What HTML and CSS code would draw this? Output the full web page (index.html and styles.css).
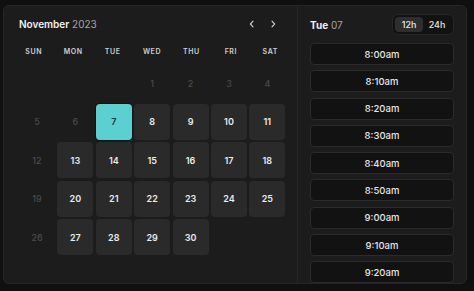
FILE: index.html
```html
<!DOCTYPE html>
<html lang="en">
<head>
    <meta charset="UTF-8">
    <title>Booker</title>
    <link rel="stylesheet" href="styles.css">
</head>
<body>
    <div class="booker">
        <div class="calendar">
            <div class="cal-header">
                <div class="month"><strong>November</strong> <span>2023</span></div>
                <div class="nav">
                    <button class="nav-btn" aria-label="Previous month">
                        <svg width="8" height="8" viewBox="0 0 8 8"><path d="M5 1.2 L2.4 4 L5 6.8" fill="none" stroke="#c8c8c8" stroke-width="1.2" stroke-linecap="round" stroke-linejoin="round"/></svg>
                    </button>
                    <button class="nav-btn" aria-label="Next month">
                        <svg width="8" height="8" viewBox="0 0 8 8"><path d="M3 1.2 L5.6 4 L3 6.8" fill="none" stroke="#c8c8c8" stroke-width="1.2" stroke-linecap="round" stroke-linejoin="round"/></svg>
                    </button>
                </div>
            </div>
            <div class="weekdays">
                <div>SUN</div><div>MON</div><div>TUE</div><div>WED</div><div>THU</div><div>FRI</div><div>SAT</div>
            </div>
            <div class="days">
                <div class="day empty"></div>
                <div class="day empty"></div>
                <div class="day empty"></div>
                <div class="day off">1</div>
                <div class="day off">2</div>
                <div class="day off">3</div>
                <div class="day off">4</div>

                <div class="day off">5</div>
                <div class="day off">6</div>
                <div class="day selected">7</div>
                <div class="day">8</div>
                <div class="day">9</div>
                <div class="day">10</div>
                <div class="day">11</div>

                <div class="day off">12</div>
                <div class="day">13</div>
                <div class="day">14</div>
                <div class="day">15</div>
                <div class="day">16</div>
                <div class="day">17</div>
                <div class="day">18</div>

                <div class="day off">19</div>
                <div class="day">20</div>
                <div class="day">21</div>
                <div class="day">22</div>
                <div class="day">23</div>
                <div class="day">24</div>
                <div class="day">25</div>

                <div class="day off">26</div>
                <div class="day">27</div>
                <div class="day">28</div>
                <div class="day">29</div>
                <div class="day">30</div>
            </div>
        </div>

        <div class="times">
            <div class="times-header">
                <div class="date"><strong>Tue</strong> <span>07</span></div>
                <div class="toggle">
                    <button class="toggle-btn active">12h</button>
                    <button class="toggle-btn">24h</button>
                </div>
            </div>
            <div class="slots">
                <button class="slot">8:00am</button>
                <button class="slot">8:10am</button>
                <button class="slot">8:20am</button>
                <button class="slot">8:30am</button>
                <button class="slot">8:40am</button>
                <button class="slot">8:50am</button>
                <button class="slot">9:00am</button>
                <button class="slot">9:10am</button>
                <button class="slot">9:20am</button>
            </div>
        </div>
    </div>
</body>
</html>
```

FILE: styles.css
```css
body {
    margin: 0;
    background-color: #101010;
    font-family: 'Inter', 'Liberation Sans', sans-serif;
    color: #ededed;
    overflow: hidden;
}
button {
    font-family: inherit;
    border: none;
    background: none;
    padding: 0;
    cursor: pointer;
}
.booker {
    display: flex;
    margin: 5px 0 0 3px;
    width: 464px;
    height: 279px;
    box-sizing: border-box;
    background-color: #1c1c1c;
    border: 1px solid #262626;
    border-radius: 6px;
    overflow: hidden;
}
.calendar {
    width: 293px;
    box-sizing: border-box;
    padding: 12px 0 0 14px;
}
.cal-header {
    display: flex;
    justify-content: space-between;
    align-items: center;
    height: 12px;
    width: 266px;
}
.month {
    font-size: 10px;
    color: #f2f2f2;
    margin-left: 1px;
}
.month strong {
    font-weight: 600;
}
.month span {
    color: #a5a5a5;
}
.nav {
    display: flex;
    gap: 13px;
    margin-right: 7px;
}
.nav-btn {
    width: 8px;
    height: 8px;
    display: flex;
}
.weekdays {
    display: grid;
    grid-template-columns: repeat(7, 1fr);
    width: 276px;
    margin: 16px 0 0 -4px;
    height: 12px;
    line-height: 12px;
    text-align: center;
    font-size: 7px;
    font-weight: 600;
    letter-spacing: 0.6px;
    color: #cfcfcf;
}
.days {
    display: grid;
    grid-template-columns: repeat(7, 36px);
    grid-auto-rows: 36px;
    gap: 2.4px;
    margin: 7.5px 0 0 1px;
}
.day {
    display: flex;
    align-items: center;
    justify-content: center;
    background-color: #2a2a2a;
    border-radius: 4px;
    font-size: 9px;
    font-weight: 600;
    color: #ececec;
}
.day.empty {
    background: none;
}
.day.off {
    background: none;
    color: #4a4a4a;
    font-weight: 500;
}
.day.selected {
    background-color: #5ccfd0;
    color: #163a3c;
    box-shadow: 0 0 0 1px #121212;
}
.times {
    flex: 1;
    border-left: 1px solid #262626;
    padding: 8px 12px 0 12px;
    box-sizing: border-box;
}
.times-header {
    display: flex;
    justify-content: space-between;
    align-items: center;
    height: 21px;
}
.date {
    font-size: 10px;
    color: #f2f2f2;
}
.date strong {
    font-weight: 700;
}
.date span {
    color: #a5a5a5;
}
.toggle {
    display: flex;
    background-color: #121212;
    border: 1px solid #262626;
    border-radius: 6px;
    padding: 2px;
    height: 21px;
    box-sizing: border-box;
}
.toggle-btn {
    width: 28px;
    font-size: 9px;
    font-weight: 500;
    color: #e5e5e5;
    border-radius: 4px;
}
.toggle-btn.active {
    background-color: #2e2e2e;
}
.slots {
    display: flex;
    flex-direction: column;
    gap: 5.3px;
    margin-top: 8px;
}
.slot {
    height: 22px;
    box-sizing: border-box;
    background-color: #121212;
    border: 1px solid #2b2b2b;
    border-radius: 4px;
    color: #e6e6e6;
    font-size: 9.5px;
    font-weight: 500;
}
```
